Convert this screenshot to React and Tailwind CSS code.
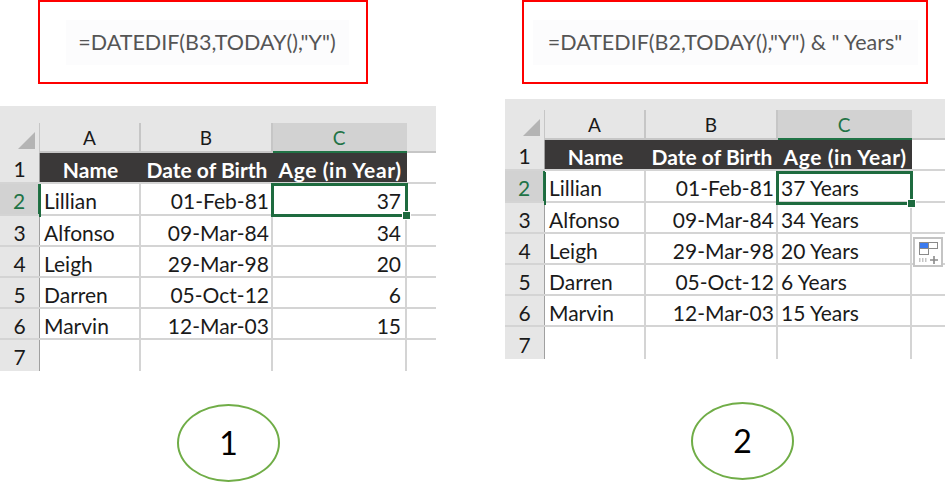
const font = { fontFamily: '"Lato", "Open Sans", sans-serif' };

const rows = [
  ["Lillian", "01-Feb-81"],
  ["Alfonso", "09-Mar-84"],
  ["Leigh", "29-Mar-98"],
  ["Darren", "05-Oct-12"],
  ["Marvin", "12-Mar-03"],
];

function Sheet({ ages, alignRight, topBand, extra, rowHs, lastH, children }) {
  const cols = "grid grid-cols-[40px_101px_132px_134px_1fr]";
  return (
    <div className={`relative bg-white text-[21px] leading-none text-[#1a1a1a] ${extra}`}>
      <div className={`bg-[#e6e6e6] ${topBand}`} />
      {/* Column letters */}
      <div className={`${cols} h-[30px] bg-[#e6e6e6] text-[19px]`}>
        <div className="relative border-r border-[#c6c6c6]">
          <div className="absolute right-[4px] bottom-[4px] w-0 h-0 border-l-[17px] border-l-transparent border-b-[17px] border-b-[#b4b4b4]" />
        </div>
        <div className="flex items-center justify-center border-r-2 border-b-2 border-[#c6c6c6]">A</div>
        <div className="flex items-center justify-center border-r-2 border-b-2 border-[#c6c6c6]">B</div>
        <div className="flex items-center justify-center pr-[2px] bg-[#d2d2d2] text-[#217346] border-b-2 border-[#217346]">C</div>
        <div className="border-b-2 border-[#c6c6c6]" />
      </div>
      {/* Header */}
      <div className={`${cols} h-[31px] border-b-2 border-[#d4d4d4]`}>
        <div className="flex items-center justify-center pt-[2px] bg-[#e6e6e6] border-r border-[#a0a0a0]">1</div>
        <div className="flex items-center justify-center pt-[3px] bg-[#3a3838] text-white font-bold">Name</div>
        <div className="flex items-center justify-center pt-[3px] bg-[#3a3838] text-white font-bold whitespace-nowrap">Date of Birth</div>
        <div className="flex items-center justify-center pt-[3px] bg-[#3a3838] text-white font-bold tracking-[0.6px] whitespace-nowrap">Age (in Year)</div>
        <div />
      </div>
      {rows.map((r, i) => {
        const pad = i === 0 ? "pt-[2px]" : "pt-[4px]";
        return (
          <div key={r[0]} className={`${cols} ${rowHs[i]} border-b-2 border-[#d4d4d4]`}>
            <div className={`flex items-center justify-center ${pad} ${i === 0 ? "bg-[#d2d2d2] text-[#217346] border-r-2 border-[#217346]" : "bg-[#e6e6e6] border-r border-[#a0a0a0]"}`}>{i + 2}</div>
            <div className={`flex items-center ${pad} pl-[4px] border-r-2 border-[#d4d4d4] whitespace-nowrap`}>{r[0]}</div>
            <div className={`flex items-center justify-end ${pad} pr-[2px] border-r-2 border-[#d4d4d4] whitespace-nowrap`}>{r[1]}</div>
            <div className={`flex items-center ${pad} border-r-2 border-[#d4d4d4] whitespace-nowrap ${alignRight ? "justify-end pr-[4px]" : "pl-[3px]"}`}>{ages[i]}</div>
            <div />
          </div>
        );
      })}
      <div className={`${cols} ${lastH}`}>
        <div className="flex items-center justify-center pt-[2px] bg-[#e6e6e6] border-r border-[#a0a0a0]">7</div>
        <div className="border-r-2 border-[#d4d4d4]" />
        <div className="border-r-2 border-[#d4d4d4]" />
        <div className="border-r-2 border-[#d4d4d4]" />
        <div />
      </div>
      {children}
    </div>
  );
}

function Selection({ top }) {
  return (
    <div className={`absolute left-[271px] w-[137px] h-[34px] border-[3px] border-[#1e6b3f] ${top}`}>
      <div className="absolute -right-[6px] -bottom-[6px] w-[9px] h-[9px] bg-[#1e6b3f] border border-white" />
    </div>
  );
}

function Formula({ children, boxClass, innerClass }) {
  return (
    <div className={`h-[84px] border-2 border-[#fe0000] flex items-center justify-center ${boxClass}`}>
      <div className={`h-[45px] flex items-center justify-center bg-[#fcfcfd] text-[#555555] text-[21.5px] whitespace-nowrap ${innerClass}`}>
        {children}
      </div>
    </div>
  );
}

function Badge({ n, cls }) {
  return (
    <div className={`w-[103px] h-[78px] rounded-[50%] border-2 border-[#70ad47] flex items-center justify-center text-[32px] text-black ${cls}`}>
      {n}
    </div>
  );
}

function PasteIcon() {
  return (
    <div className="absolute left-[408px] top-[138px] w-[30px] h-[30px] bg-white border-2 border-[#c4c4c4]">
      <svg width="26" height="26" viewBox="0 0 26 26" fill="none">
        <rect x="4.5" y="3.5" width="9" height="6" fill="#3b7bf0" stroke="#8a8a8a" />
        <rect x="13.5" y="3.5" width="9" height="6" fill="#fff" stroke="#8a8a8a" />
        <rect x="4.5" y="9.5" width="9" height="6" fill="#fff" stroke="#8a8a8a" />
        <path d="M4 20h9M4 22h9" stroke="#8a8a8a" strokeDasharray="1.5 1.5" />
        <path d="M15 21h8M19 17v8" stroke="#8a8a8a" strokeWidth="1.6" />
      </svg>
    </div>
  );
}

export default function App() {
  return (
    <div className="w-[945px] h-[488px] bg-white flex overflow-hidden" style={font}>
      <div className="w-[505px] shrink-0">
        <Formula boxClass="ml-[38px] w-[330px]" innerClass="w-[283px] ml-[8px]">=DATEDIF(B3,TODAY(),"Y")</Formula>
        <Sheet
          extra="mt-[22px] w-[436px]"
          topBand="h-[17px]"
          alignRight
          lastH="h-[31px]"
          ages={["37", "34", "20", "6", "15"]}
          rowHs={["h-[32px]", "h-[31px]", "h-[31px]", "h-[31px]", "h-[31px]"]}
        >
          <Selection top="top-[77px]" />
          <div className="absolute left-[39px] top-[78px] w-[2px] h-[33px] bg-[#1e6b3f]" />
        </Sheet>
        <Badge n="1" cls="mt-[33px] ml-[177px]" />
      </div>
      <div className="w-[440px] shrink-0">
        <Formula boxClass="ml-[17px] w-[406px]" innerClass="w-[385px]">=DATEDIF(B2,TODAY(),"Y") &amp; " Years"</Formula>
        <Sheet
          extra="mt-[15px] w-[440px]"
          topBand="h-[11px]"
          lastH="h-[32px]"
          ages={["37 Years", "34 Years", "20 Years", "6 Years", "15 Years"]}
          rowHs={["h-[32px]", "h-[31px]", "h-[31px]", "h-[31px]", "h-[31px]"]}
        >
          <Selection top="top-[72px]" />
          <div className="absolute left-[39px] top-[73px] w-[2px] h-[33px] bg-[#1e6b3f]" />
          <PasteIcon />
        </Sheet>
        <Badge n="2" cls="mt-[43px] ml-[186px]" />
      </div>
    </div>
  );
}
